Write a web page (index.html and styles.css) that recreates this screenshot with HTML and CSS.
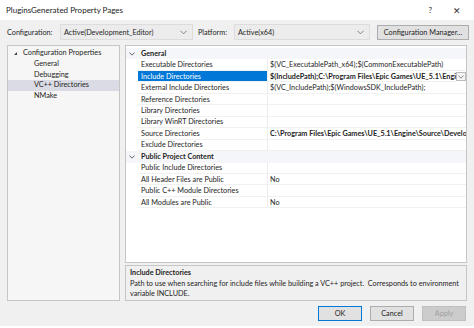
FILE: index.html
```html
<!DOCTYPE html>
<html>
<head>
<meta charset="utf-8">
<link rel="stylesheet" href="styles.css">
</head>
<body>
<div class="window">
  <div class="titlebar">
    <span class="title">PluginsGenerated Property Pages</span>
    <span class="tb-btns"><span class="help">?</span><span class="close">&#x2715;</span></span>
  </div>
  <div class="toolbar">
    <span class="lbl">Configuration:</span>
    <div class="combo combo-config"><span>Active(Development_Editor)</span><svg class="chev" viewBox="0 0 8 5" width="7" height="5"><path d="M0.5 0.5 L4 4 L7.5 0.5" fill="none" stroke="#777" stroke-width="1"/></svg></div>
    <span class="lbl lbl-plat">Platform:</span>
    <div class="combo combo-plat"><span>Active(x64)</span><svg class="chev" viewBox="0 0 8 5" width="7" height="5"><path d="M0.5 0.5 L4 4 L7.5 0.5" fill="none" stroke="#777" stroke-width="1"/></svg></div>
    <div class="btn btn-cm">Configuration Manager...</div>
  </div>
  <div class="main">
    <div class="tree">
      <div class="node root"><span class="tri"></span>Configuration Properties</div>
      <div class="node child">General</div>
      <div class="node child">Debugging</div>
      <div class="node child sel">VC++ Directories</div>
      <div class="node child">NMake</div>
    </div>
    <div class="right">
      <div class="grid">
        <div class="row cat"><span class="gut"><svg viewBox="0 0 8 5" width="6" height="4"><path d="M0.5 0.5 L4 4 L7.5 0.5" fill="none" stroke="#555" stroke-width="1.2"/></svg></span><span class="name">General</span><span class="val"></span></div>
        <div class="row"><span class="gut"></span><span class="name">Executable Directories</span><span class="val">$(VC_ExecutablePath_x64);$(CommonExecutablePath)</span></div>
        <div class="row selrow"><span class="gut"></span><span class="name">Include Directories</span><span class="val b">$(IncludePath);C:\Program Files\Epic Games\UE_5.1\Engine\Source</span><span class="ddb"><svg viewBox="0 0 8 5" width="6" height="4"><path d="M0.5 0.5 L4 4 L7.5 0.5" fill="none" stroke="#666" stroke-width="1"/></svg></span></div>
        <div class="row"><span class="gut"></span><span class="name">External Include Directories</span><span class="val">$(VC_IncludePath);$(WindowsSDK_IncludePath);</span></div>
        <div class="row"><span class="gut"></span><span class="name">Reference Directories</span><span class="val"></span></div>
        <div class="row"><span class="gut"></span><span class="name">Library Directories</span><span class="val"></span></div>
        <div class="row"><span class="gut"></span><span class="name">Library WinRT Directories</span><span class="val"></span></div>
        <div class="row"><span class="gut"></span><span class="name">Source Directories</span><span class="val b">C:\Program Files\Epic Games\UE_5.1\Engine\Source\Developer</span></div>
        <div class="row"><span class="gut"></span><span class="name">Exclude Directories</span><span class="val"></span></div>
        <div class="row cat"><span class="gut"><svg viewBox="0 0 8 5" width="6" height="4"><path d="M0.5 0.5 L4 4 L7.5 0.5" fill="none" stroke="#555" stroke-width="1.2"/></svg></span><span class="name">Public Project Content</span><span class="val"></span></div>
        <div class="row"><span class="gut"></span><span class="name">Public Include Directories</span><span class="val"></span></div>
        <div class="row"><span class="gut"></span><span class="name">All Header Files are Public</span><span class="val">No</span></div>
        <div class="row"><span class="gut"></span><span class="name">Public C++ Module Directories</span><span class="val"></span></div>
        <div class="row"><span class="gut"></span><span class="name">All Modules are Public</span><span class="val">No</span></div>
      </div>
      <div class="desc">
        <div class="desc-title">Include Directories</div>
        <div class="desc-text">Path to use when searching for include files while building a VC++ project.&nbsp; Corresponds to environment variable INCLUDE.</div>
      </div>
    </div>
  </div>
  <div class="buttons">
    <div class="btn btn-ok">OK</div>
    <div class="btn">Cancel</div>
    <div class="btn disabled">Apply</div>
  </div>
</div>
</body>
</html>
```

FILE: styles.css
```css
* { box-sizing: border-box; }
html, body { margin: 0; padding: 0; }
body {
  width: 474px;
  height: 328px;
  overflow: hidden;
  background: #ffffff;
  font-family: "Lato", "Open Sans", sans-serif;
  font-size: 7.25px;
  color: #1e1e1e;
}
.window {
  width: 474px;
  height: 326px;
  background: #f0f0f0;
  display: flex;
  flex-direction: column;
}
.titlebar {
  height: 20px;
  background: #ffffff;
  display: flex;
  align-items: center;
  justify-content: space-between;
  padding: 0 13px 0 6px;
  flex: none;
}
.title { font-size: 8px; color: #222; }
.tb-btns { display: flex; gap: 21px; align-items: center; color: #333; }
.help { font-size: 8px; }
.close { font-size: 9px; }
.toolbar {
  margin-top: 4px;
  height: 16px;
  display: flex;
  align-items: center;
  padding-left: 7px;
  flex: none;
}
.lbl { width: 53px; }
.lbl-plat { width: 36px; margin-left: 5px; }
.combo {
  height: 16px;
  display: flex;
  align-items: center;
  justify-content: space-between;
  padding: 0 3px 0 3px;
  border: 1px solid #dcdcdc;
  background: #ececec;
}
.combo-config { width: 133px; }
.combo-plat { width: 136px; }
.chev { margin-right: 2px; }
.btn {
  height: 15px;
  width: 44px;
  display: flex;
  align-items: center;
  justify-content: center;
  background: #e1e1e1;
  border: 1px solid #adadad;
}
.btn-cm { width: 92px; margin-left: 7px; }
.main {
  margin-top: 5px;
  display: flex;
  gap: 5px;
  padding-left: 7px;
  flex: none;
}
.tree {
  width: 113px;
  height: 256px;
  background: #f6f6f6;
  border: 1px solid #c6c6c6;
  padding-top: 2px;
}
.node { height: 10.75px; line-height: 10.75px; white-space: nowrap; }
.root { padding-left: 6px; display: flex; align-items: center; }
.tri {
  width: 0; height: 0;
  border-left: 3px solid transparent;
  border-bottom: 3px solid #444;
  margin-right: 6px;
}
.child { padding-left: 26px; }
.sel { background: #dadbe4; }
.right {
  width: 342px;
  display: flex;
  flex-direction: column;
  gap: 2px;
}
.grid {
  height: 218px;
  background: #ffffff;
  border: 1px solid #c6c6c6;
  padding-top: 2px;
}
.row {
  height: 11.46px;
  display: flex;
  align-items: stretch;
  position: relative;
}
.row > span { display: flex; align-items: center; white-space: nowrap; overflow: hidden; }
.gut { width: 12px; flex: none; justify-content: center; }
.name {
  width: 130px; flex: none; padding-left: 3px;
  border-bottom: 1px solid #f1f1f1;
  border-right: 1px solid #ececec;
}
.val {
  flex: 1; padding-left: 2px; min-width: 0;
  border-bottom: 1px solid #f1f1f1;
}
.b { font-weight: 700; }
.cat { background: #f5f6f9; }
.cat .name { font-weight: 700; border-right: none; }
.cat .name, .cat .val { border-bottom: none; }
.selrow .name { background: #0078d7; color: #fff; }
.ddb {
  width: 10px; flex: none;
  justify-content: center;
  border: 1px solid #bbb;
  background: #f4f4f4;
  margin: 1px 0;
}
.desc {
  height: 36px;
  border: 1px solid #c6c6c6;
  background: #f0f0f0;
  padding: 2px 4px;
  line-height: 10.5px;
}
.desc-title { font-weight: 700; }
.buttons {
  margin-top: 5px;
  display: flex;
  justify-content: flex-end;
  gap: 8px;
  padding-right: 8px;
  flex: none;
}
.btn-ok { border: 1px solid #0078d7; }
.disabled { color: #a0a0a0; background: #cccccc; border-color: #bfbfbf; }
```
